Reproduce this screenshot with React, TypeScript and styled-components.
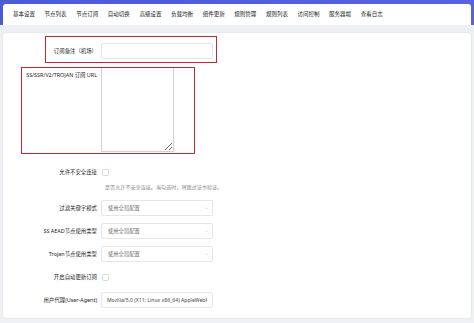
import React from 'react';
import styled, { createGlobalStyle } from 'styled-components';
import { ChevronDown } from 'lucide-react';

const GlobalStyle = createGlobalStyle`
  html, body {
    margin: 0;
    padding: 0;
    background: #eff0f4;
    font-family: 'Noto Sans', 'Noto Sans CJK SC', sans-serif;
    color: #222;
  }
  * { box-sizing: border-box; }
`;

const Page = styled.div`
  width: 474px;
  height: 323px;
  overflow: hidden;
  background: #eff0f4;
`;

const Header = styled.div`
  background: linear-gradient(90deg, #4d5ad6 0%, #5862dc 100%);
  height: 25px;
  padding: 4px 3px 0;
`;

const Nav = styled.nav`
  height: 21px;
  background: #fff;
  border-radius: 3px 3px 0 0;
  display: flex;
  align-items: center;
  gap: 9.6px;
  padding: 0 10px;
`;

const NavItem = styled.span`
  font-size: 5.5px;
  line-height: 1;
  color: #222;
  white-space: nowrap;
`;

const Card = styled.section`
  position: relative;
  margin: 8px 3px 0;
  background: #fff;
  border-radius: 3px;
  box-shadow: 0 0 2px rgba(0, 0, 0, 0.1);
  padding: 10px 0;
`;

const Row = styled.div<{ $top?: number; $align?: string }>`
  display: grid;
  grid-template-columns: 94px 112px;
  column-gap: 4px;
  align-items: ${(p) => p.$align || 'center'};
  margin-top: ${(p) => p.$top || 0}px;
`;

const Label = styled.label<{ $padTop?: number }>`
  font-size: 5.4px;
  line-height: 8px;
  text-align: right;
  color: #222;
  white-space: nowrap;
  padding-top: ${(p) => p.$padTop || 0}px;
`;

const TextInput = styled.input`
  height: 16px;
  width: 112px;
  border: 1px solid #e6e6e6;
  border-radius: 2px;
  padding: 0 5px;
  font-family: inherit;
  font-size: 5.1px;
  color: #444;
  background: #fff;
  outline: none;
`;

const TextArea = styled.textarea`
  width: 73px;
  height: 85px;
  border: 1px solid #d2d2d2;
  border-radius: 1px;
  padding: 3px;
  font-family: inherit;
  font-size: 5.3px;
  outline: none;
  display: block;
`;

const CheckBox = styled.span`
  width: 7px;
  height: 7px;
  margin-left: 1px;
  border: 1px solid #d9d9d9;
  border-radius: 1.5px;
  background: #fff;
`;

const CheckCell = styled.div`
  height: 16px;
  display: flex;
  align-items: center;
`;

const Help = styled.div`
  margin: 2px 0 0 102px;
  font-size: 5.1px;
  line-height: 10px;
  color: #8c8c8c;
  white-space: nowrap;
`;

const SelectBox = styled.div`
  height: 16px;
  border: 1px solid #e6e6e6;
  border-radius: 2px;
  background: #fff;
  display: flex;
  align-items: center;
  justify-content: space-between;
  padding: 0 3px 0 6px;
  font-size: 5.3px;
  color: #666;
`;

const Highlight = styled.div<{ $x: number; $y: number; $w: number; $h: number }>`
  position: absolute;
  left: ${(p) => p.$x}px;
  top: ${(p) => p.$y}px;
  width: ${(p) => p.$w}px;
  height: ${(p) => p.$h}px;
  border: 1.6px solid #c3272f;
  pointer-events: none;
`;

const navItems = [
  '基本设置', '节点列表', '节点订阅', '自动切换', '高级设置', '负载均衡',
  '组件更新', '规则管理', '规则列表', '访问控制', '服务器端', '查看日志',
];

const Select = ({ value }: { value: string }) => (
  <SelectBox>
    <span>{value}</span>
    <ChevronDown size={5} strokeWidth={1.5} color="#aaa" />
  </SelectBox>
);

export default function App() {
  return (
    <Page>
      <GlobalStyle />
      <Header>
        <Nav>
          {navItems.map((n) => (
            <NavItem key={n}>{n}</NavItem>
          ))}
        </Nav>
      </Header>
      <Card>
        <Row>
          <Label>订阅备注（机场）</Label>
          <TextInput />
        </Row>
        <Row $top={8} $align="start">
          <Label $padTop={4}>SS/SSR/V2/TROJAN 订阅 URL</Label>
          <TextArea />
        </Row>
        <Row $top={12}>
          <Label>允许不安全连接</Label>
          <CheckCell><CheckBox /></CheckCell>
        </Row>
        <Help>是否允许不安全连接。当勾选时，将跳过证书验证。</Help>
        <Row $top={8}>
          <Label>过滤关键字模式</Label>
          <Select value="使用全局配置" />
        </Row>
        <Row $top={7}>
          <Label>SS AEAD节点使用类型</Label>
          <Select value="使用全局配置" />
        </Row>
        <Row $top={7}>
          <Label>Trojan节点使用类型</Label>
          <Select value="使用全局配置" />
        </Row>
        <Row $top={7}>
          <Label>开启自动更新订阅</Label>
          <CheckCell><CheckBox /></CheckCell>
        </Row>
        <Row $top={7}>
          <Label>用户代理(User-Agent)</Label>
          <TextInput readOnly value="Mozilla/5.0 (X11; Linux x86_64) AppleWebKit/537.36" />
        </Row>
        <Highlight $x={42} $y={3} $w={172} $h={27} />
        <Highlight $x={18} $y={34} $w={174} $h={87} />
      </Card>
    </Page>
  );
}
